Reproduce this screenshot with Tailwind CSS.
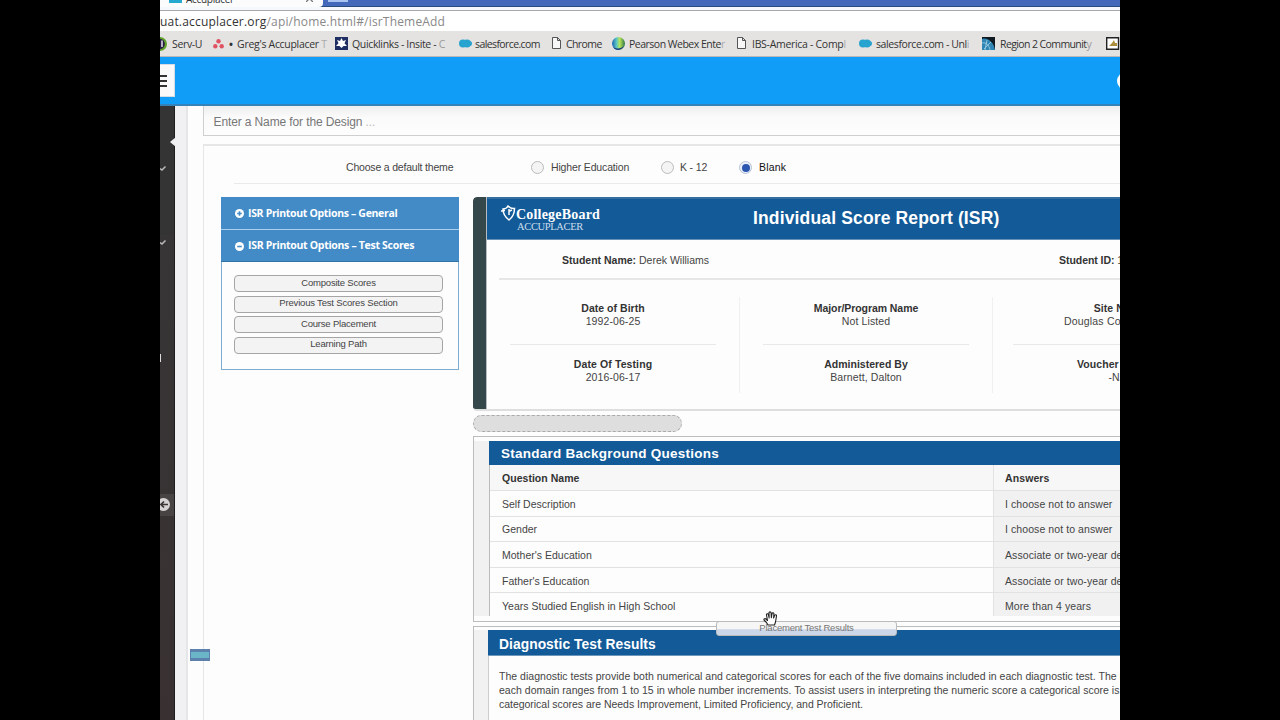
<!DOCTYPE html>
<html lang="en">
<head>
<meta charset="utf-8">
<title>Individual Score Report Designer</title>
<script src="https://cdn.jsdelivr.net/npm/@tailwindcss/browser@4"></script>
</head>
<body class="bg-black">
<div class="mx-auto flex h-[720px] w-[960px] flex-col overflow-hidden bg-[#fdfdfd] font-['Liberation_Sans',Arial,sans-serif] text-[11px] text-[#444] whitespace-nowrap">

  <!-- Browser tab strip -->
  <div class="flex h-[7px] shrink-0 bg-[#4469bb] border-b border-[#2b4a80]">
    <div class="flex h-[7px] w-[163px] shrink-0 items-end overflow-hidden rounded-br-[4px] bg-[#fcfcfd]">
      <div class="ml-[9px] mb-[4px] h-[5px] w-[13px] shrink-0 bg-[#27a9cf]"></div>
      <div class="mb-[3px] ml-[4px] w-[120px] font-['Open_Sans',sans-serif] text-[10px] leading-[10px] tracking-[-0.3px] text-[#333]">Accuplacer</div>
      <svg class="mb-[5px] h-[7px] w-[7px] shrink-0" viewBox="0 0 7 7" stroke="#777" stroke-width="1.3"><path d="M0 0L7 7M7 0L0 7"/></svg>
    </div>
    <div class="ml-[5px] h-[2px] w-[20px] bg-[#a9c4f0]"></div>
  </div>
  <div class="h-[4px] shrink-0 border-b border-[#aaa7ab] bg-[#f5f8fc]"></div>
  <!-- Address bar -->
  <div class="h-[20px] shrink-0 bg-white font-['Open_Sans',sans-serif] text-[12px] leading-[22px] tracking-[0.18px] text-[#888]"><span class="text-[#333]">uat.accuplacer.org</span>/api/home.html#/isrThemeAdd</div>
  <!-- Bookmarks -->
  <div class="relative h-[26px] shrink-0 border-b border-[#b9b6b6] bg-[#e5e3e2] font-['Open_Sans',sans-serif] text-[10.5px] leading-[27px] text-[#333]">
    <svg class="absolute left-[-7px] top-[6px] h-[14px] w-[14px]" viewBox="0 0 14 14"><circle cx="7" cy="7" r="7" fill="#63a32c"/><circle cx="6.500" cy="7" r="5.300" fill="#271b45"/><path d="M9 3.500V10" stroke="#fff" stroke-width="1.300"/></svg>
    <span class="absolute left-[12px] tracking-[-0.35px]">Serv-U</span>
    <svg class="absolute left-[53px] top-[8px] h-[10px] w-[11px]" viewBox="0 0 11 10" fill="#df5362"><circle cx="5.5" cy="2.3" r="2.2"/><circle cx="2.3" cy="7.3" r="2.2"/><circle cx="8.7" cy="7.3" r="2.2"/></svg>
    <span class="absolute left-[69px] tracking-[-0.3px]"><span class="mr-[2px] font-bold">•</span> Greg's Accuplacer <span class="text-[#aaa]">T</span></span>
    <svg class="absolute left-[175px] top-[6px] h-[13px] w-[13px]" viewBox="0 0 13 13"><path fill="#1e2e63" d="M0 0H13V13H0Z"/><path fill="#fff" d="M6.5 1L8 4L11 3L9.5 6.3L12 9H8.5L6.5 11L4.500 9H1L3.500 6.300L2 3L5 4Z"/></svg>
    <span class="absolute left-[192px] tracking-[-0.35px]">Quicklinks - Insite - <span class="text-[#999]">C</span></span>
    <svg class="absolute left-[299px] top-[8px] h-[10px] w-[13px]" viewBox="0 0 13 10" fill="#27a3d0"><circle cx="4" cy="4.500" r="4"/><circle cx="8" cy="4.500" r="4"/><circle cx="10.500" cy="4.500" r="2.500"/></svg>
    <span class="absolute left-[315px] tracking-[-0.6px]">salesforce.com</span>
    <svg class="absolute left-[392px] top-[6px] h-[12px] w-[9px]" viewBox="0 0 9 12" fill="#f7f7f7" stroke="#555"><path d="M.5.5H5.500L8.500 3.500V11.500H.5ZM5.500.5V3.500H8.500"/></svg>
    <span class="absolute left-[406px] tracking-[-0.6px]">Chrome</span>
    <svg class="absolute left-[452px] top-[6px] h-[13px] w-[13px]" viewBox="0 0 13 13"><defs><linearGradient id="orb"><stop stop-color="#1c62b0"/><stop offset=".35" stop-color="#5dc6c4"/><stop offset=".6" stop-color="#b9e457"/><stop offset="1" stop-color="#26734b"/></linearGradient></defs><circle cx="6.500" cy="6.500" r="6.500" fill="url(#orb)"/><path d="M1 10C4 12 9 12 12 9C10 14 3 14 1 10" fill="#153f83"/></svg>
    <span class="absolute left-[469px] tracking-[-0.5px]">Pearson Webex Ente<span class="text-[#aaa]">r</span></span>
    <svg class="absolute left-[577px] top-[6px] h-[12px] w-[9px]" viewBox="0 0 9 12" fill="#f7f7f7" stroke="#555"><path d="M.5.5H5.500L8.500 3.500V11.500H.5ZM5.500.5V3.500H8.500"/></svg>
    <span class="absolute left-[592px] tracking-[-0.3px]">IBS-America - Comp<span class="text-[#aaa]">l</span></span>
    <svg class="absolute left-[699px] top-[8px] h-[10px] w-[13px]" viewBox="0 0 13 10" fill="#27a3d0"><circle cx="4" cy="4.500" r="4"/><circle cx="8" cy="4.500" r="4"/><circle cx="10.500" cy="4.500" r="2.500"/></svg>
    <span class="absolute left-[716px] tracking-[-0.4px]">salesforce.com - Unl<span class="text-[#aaa]">i</span></span>
    <svg class="absolute left-[822px] top-[6px] h-[13px] w-[13px]" viewBox="0 0 13 13"><path fill="#101820" d="M0 0H13V13H0Z"/><path fill="#2f86b5" d="M0 2C6 0 12 6 13 13H0Z"/><path d="M0 6C4 5 7 8 8 13M5 3L3 13M9 5L2 12" stroke="#a8d4e5" fill="none" stroke-width=".8"/></svg>
    <span class="absolute left-[840px] tracking-[-0.6px]">Region 2 Communit<span class="text-[#999]">y</span></span>
    <svg class="absolute left-[946px] top-[6px] h-[13px] w-[14px]" viewBox="0 0 14 13"><path d="M.7.7H12.500V12.300H.7Z" fill="#fff" stroke="#222" stroke-width="1.400"/><path d="M3 9L6 6L8 3L9 6H11V9Z" fill="#ad8d3b"/></svg>
  </div>
  <!-- Application header -->
  <header class="flex h-[49px] shrink-0 items-center justify-between border-b-2 border-[#3382b9] bg-[#0f9df8]">
    <div class="flex h-[33px] w-[15px] flex-col justify-center gap-[3px] border border-l-0 border-[#d5dce3] bg-[#f9f9fa]">
      <div class="h-[2px] w-[7px] bg-[#333]"></div><div class="h-[2px] w-[7px] bg-[#333]"></div><div class="h-[2px] w-[7px] bg-[#333]"></div>
    </div>
    <svg class="h-[18px] w-[3px]" viewBox="0 0 3 18"><circle cx="9" cy="9" r="9" fill="#fff"/></svg>
  </header>

  <div class="flex min-h-0 flex-1">
    <!-- Collapsed side navigation -->
    <nav class="relative w-[15px] shrink-0 border-r border-[#1f1d1d] bg-linear-to-b from-[#363637] to-[#393131]">
      <div class="h-[129px] bg-[#343435]"></div>
      <svg class="absolute left-[10px] top-[31px] h-[10px] w-[6px]" viewBox="0 0 6 10"><path d="M6 0V10L0 5Z" fill="#f0f0f2"/></svg>
      <svg class="absolute left-0 top-[60px] h-[5px] w-[6px]" viewBox="0 0 6 5" fill="none" stroke="#bbb" stroke-width="1.500"><path d="M0 2.500L2 4L5.500 .5"/></svg>
      <svg class="absolute left-0 top-[134px] h-[5px] w-[6px]" viewBox="0 0 6 5" fill="none" stroke="#bbb" stroke-width="1.500"><path d="M0 2.500L2 4L5.500 .5"/></svg>
      <div class="absolute left-0 top-[248px] h-[8px] w-px bg-[#ddd]"></div>
      <div class="absolute left-0 top-[388px] h-[22px] w-[14px] bg-[#484444]"></div>
      <svg class="absolute left-[-3px] top-[392px] h-[13px] w-[13px]" viewBox="0 0 13 13"><circle cx="6.500" cy="6.500" r="6.500" fill="#d5d3d3"/><path d="M11 6.500H4M7 3.500L4 6.500L7 9.500" fill="none" stroke="#3a3636" stroke-width="1.700"/></svg>
    </nav>
    <div class="relative w-[13px] shrink-0 border-r-2 border-[#e6e6e8] bg-[#f1f1f3]">
      <div class="absolute left-[15px] top-[543px] h-[12px] w-[20px] border-y-3 border-x border-[#5b81ac] bg-[#6bb5c8]"></div>
    </div>
    <main class="ml-[15px] min-w-0 flex-1">
      <div class="h-[30px] border-b border-l border-[#cfcfcf] bg-linear-to-b from-[#eeeeef] via-[#fbfbfb] via-40% to-[#fdfdfd] pl-[9.5px] text-[12px] leading-[33px] tracking-[-0.12px] text-[#777]">Enter a Name for the Design <span class="text-[#bbb]">...</span></div>
      <section class="mt-[8px] h-[580px] border-l border-t-2 border-[#e6e6e7] pl-[17px]">
        <!-- Theme selector -->
        <div class="ml-[13px] flex h-[38px] items-center border-b border-[#eaeaea] pb-px pt-[7px] text-[10.5px] text-[#444]">
          <span class="ml-[112px] w-[185px] tracking-[-0.19px]">Choose a default theme</span>
          <i class="h-[13px] w-[13px] shrink-0 rounded-full border border-[#bbb] bg-[#f4f4f4]"></i>
          <span class="ml-[7px] w-[110px] tracking-[-0.15px]">Higher Education</span>
          <i class="h-[13px] w-[13px] shrink-0 rounded-full border border-[#bbb] bg-[#f4f4f4]"></i>
          <span class="ml-[6px] w-[59px] tracking-[-0.15px]">K - 12</span>
          <i class="flex h-[13px] w-[13px] shrink-0 items-center justify-center rounded-full border border-[#b9c4d8] bg-[#e9eef8]"><b class="h-[8px] w-[8px] rounded-full bg-[#2b57b0]"></b></i>
          <span class="ml-[7px] tracking-[0.2px] text-[#111]">Blank</span>
        </div>

        <div class="mt-[13px] flex gap-[14px]">
          <!-- Printout options accordion -->
          <aside class="h-[173px] w-[238px] shrink-0 border border-[#7eacd0] bg-[#fdfdfd]">
            <div class="-mx-px -mt-px flex h-[32px] items-center gap-[4px] bg-[#428bc7] pl-[14px] pt-px font-['Open_Sans',sans-serif] text-[10.5px] font-bold tracking-[-0.32px] text-white">
              <svg class="h-[9px] w-[9px]" viewBox="0 0 10 10"><circle cx="5" cy="5" r="5" fill="#fff"/><path d="M5 2.500V7.500M2.500 5H7.500" stroke="#428bc7" stroke-width="1.800"/></svg>
              ISR Printout Options – General
            </div>
            <div class="-mx-px flex h-[33px] items-center gap-[4px] border-b border-t border-b-[#3274aa] border-t-[#a9cff0] bg-[#428bc7] pl-[14px] pt-px font-['Open_Sans',sans-serif] text-[10.5px] font-bold tracking-[-0.3px] text-white">
              <svg class="h-[9px] w-[9px]" viewBox="0 0 10 10"><circle cx="5" cy="5" r="5" fill="#fff"/><path d="M2.500 5H7.500" stroke="#428bc7" stroke-width="1.800"/></svg>
              ISR Printout Options – Test Scores
            </div>
            <div class="flex flex-col gap-[3.500px] pl-[12px] pr-[15px] pt-[13px] text-center text-[9.5px] leading-[13px] tracking-[-0.2px] text-[#444]">
              <div class="h-[17px] rounded-[4px] border border-[#a5a5a5] bg-[#f3f3f4]">Composite Scores</div>
              <div class="h-[17px] rounded-[4px] border border-[#a5a5a5] bg-[#f3f3f4] leading-[12px] tracking-[-0.18px]">Previous Test Scores Section</div>
              <div class="h-[17px] rounded-[4px] border border-[#a5a5a5] bg-[#f3f3f4]">Course Placement</div>
              <div class="h-[17px] rounded-[4px] border border-[#a5a5a5] bg-[#f3f3f4] leading-[12px]">Learning Path</div>
            </div>
          </aside>

          <!-- Report preview -->
          <div class="min-w-0 flex-1 text-[10.5px]">
            <article class="flex h-[214px] overflow-hidden rounded-l-[4px] border-b-2 border-[#dedede]">
              <div class="-mb-[2px] w-[14px] shrink-0 rounded-l-[4px] border-r border-[#b6bcbf] bg-[#34474a]"></div>
              <div class="min-w-0 flex-1 overflow-hidden">
                <div class="flex h-[43px] items-center border-b border-t-2 border-b-[#6791b6] border-t-[#346f9f] bg-[#125a98] text-white">
                  <svg class="-mt-[11px] ml-[14px] h-[17px] w-[15px] shrink-0" viewBox="0 0 15 17" fill="none" stroke="#fff" stroke-width="1.500"><path d="M2 4C4 4 6 3 7 1C9 3 11 4 13.500 3.500C13.500 9 12 12 8 15C4 12 2 9 2 4ZM0 6L4 5.500M8 4V10M7.500 6.500L11 5"/></svg>
                  <div class="w-[237px] pt-[2px] font-['Liberation_Serif',serif]">
                    <div class="text-[14px] font-bold leading-[13px] tracking-[0.2px]">CollegeBoard</div>
                    <div class="pl-px text-[10.5px] leading-[12px] tracking-[-0.35px] text-[#cfdfec]">ACCUPLACER</div>
                  </div>
                  <h1 class="pb-px text-[17.5px] font-bold tracking-[0.15px]">Individual Score Report (ISR)</h1>
                </div>
                <div class="ml-[12px] flex h-[40px] border-b-2 border-[#e6e6e6] pl-[63px] leading-[41px]">
                  <span class="w-[497px] shrink-0"><b class="text-[#333]">Student Name:</b> Derek Williams</span>
                  <span class="shrink-0 tracking-[-0.05px]"><b class="text-[#333]">Student ID:</b> 123</span>
                </div>
                <div class="mt-[17px] grid h-[96px] w-[759px] grid-cols-[253px_253px_253px] text-center leading-[13px] tracking-[0.1px]">
                  <div class="border-r border-[#f0f0f0] px-[23px]">
                    <div class="h-[48px] border-b border-[#e9e9e9] pt-[5px]"><b class="tracking-[0.03px] text-[#333]">Date of Birth</b><br>1992-06-25</div>
                    <div class="pt-[13px]"><b class="text-[#333]">Date Of Testing</b><br>2016-06-17</div>
                  </div>
                  <div class="border-r border-[#f0f0f0] px-[23px]">
                    <div class="h-[48px] border-b border-[#e9e9e9] pt-[5px]"><b class="tracking-[-0.07px] text-[#333]">Major/Program Name</b><br>Not Listed</div>
                    <div class="pt-[13px]"><b class="tracking-[0px] text-[#333]">Administered By</b><br>Barnett, Dalton</div>
                  </div>
                  <div class="px-[20px]">
                    <div class="h-[48px] border-b border-[#e9e9e9] pt-[5px]"><b class="text-[#333]">Site Name</b><br><span class="tracking-[0.2px]">Douglas College Site 1</span></div>
                    <div class="pt-[13px]"><b class="text-[#333]">Voucher Number</b><br>-NA-</div>
                  </div>
                </div>
              </div>
            </article>

            <div class="mt-[4px] h-[17px] w-[209px] rounded-full border border-dashed border-[#aaa] bg-[#dedede]"></div>

            <article class="mt-[4px] h-[186px] border border-r-0 border-[#bcbcbc] bg-[#fdfdfd]">
              <div class="mt-[4px] border-l-[15px] border-[#f1f1f2]">
                <h2 class="h-[24px] bg-[#125a98] pl-[12px] text-[13.5px] font-bold leading-[25px] tracking-[0.25px] text-white">Standard Background Questions</h2>
                <div class="grid grid-cols-[504px_1fr] border-l border-[#bbb] leading-[26px] tracking-[0.01px]">
                  <div class="h-[26px] border-b border-r border-[#e2e2e2] bg-[#f7f7f7] pl-[12px] font-bold tracking-[0.03px] text-[#333]">Question Name</div>
                  <div class="h-[26px] border-b border-[#e2e2e2] bg-[#f7f7f7] pl-[11px] font-bold tracking-[0.1px] text-[#333]">Answers</div>
                  <div class="h-[25.600px] border-b border-r border-[#e2e2e2] pl-[12px]">Self Description</div>
                  <div class="h-[25.600px] border-b border-[#e2e2e2] bg-[#f1f1f2] pl-[11px] tracking-[0.08px]">I choose not to answer</div>
                  <div class="h-[25.600px] border-b border-r border-[#e2e2e2] pl-[12px] leading-[25px]">Gender</div>
                  <div class="h-[25.600px] border-b border-[#e2e2e2] bg-[#f1f1f2] pl-[11px] leading-[25px] tracking-[0.08px]">I choose not to answer</div>
                  <div class="h-[25.600px] border-b border-r border-[#e2e2e2] pl-[12px]">Mother's Education</div>
                  <div class="h-[25.600px] border-b border-[#e2e2e2] bg-[#f1f1f2] pl-[11px] tracking-[0.08px]">Associate or two-year degree</div>
                  <div class="h-[25.600px] border-b border-r border-[#e2e2e2] pl-[12px]">Father's Education</div>
                  <div class="h-[25.600px] border-b border-[#e2e2e2] bg-[#f1f1f2] pl-[11px] tracking-[0.08px]">Associate or two-year degree</div>
                  <div class="h-[23px] border-r border-[#e2e2e2] pl-[12px]">Years Studied English in High School</div>
                  <div class="h-[23px] bg-[#f1f1f2] pl-[11px] tracking-[0.08px]">More than 4 years</div>
                </div>
              </div>
            </article>

            <article class="relative mt-[4px] h-[110px] border-l border-t border-[#bcbcbc] bg-[#fdfdfd] pt-[3px]">
              <div class="h-[106px] border-l-[14px] border-[#f1f1f2]">
                <h2 class="h-[26px] border-b border-[#6e98bb] bg-[#125a98] pl-[11px] text-[13.8px] font-bold leading-[29px] tracking-[0.06px] text-white">Diagnostic Test Results</h2>
                <p class="h-[80px] border-l border-[#ccc] pl-[10px] pt-[14px] leading-[13.800px] tracking-[-0.03px]"><span class="tracking-[0.02px]">The diagnostic tests provide both numerical and categorical scores for each of the five domains included in each diagnostic test. The numeric score for<br>each domain ranges from 1 to 15 in whole number increments. To assist users in interpreting the numeric score a categorical score is also given. The</span><br>categorical scores are Needs Improvement, Limited Proficiency, and Proficient.</p>
              </div>
              <!-- Section being dragged into place -->
              <div class="absolute left-[242px] top-[-6px] h-[15px] w-[181px] rounded-[3px] border border-[#bbb] bg-linear-to-b from-[#f6f6f6] from-50% to-[#ccd6e9] to-60% text-center text-[9.5px] leading-[12px] tracking-[-0.22px] text-[#777]">Placement Test Results</div>
              <svg class="absolute left-[289px] top-[-16px] h-[16px] w-[15px]" viewBox="0 0 15 16" fill="#fff" stroke="#222" stroke-width="1.100" stroke-linejoin="round"><path d="M5 14L3.500 11.500L1 9C.5 7.500 2.200 7.300 3 8L4.500 9.500L3.500 4C3.300 2.500 5 2.200 5.400 3.600L6.200 7L6 2C6 .5 8 .5 8.100 2L8.400 6.600L9 2.600C9.300 1.300 11 1.600 10.900 3L10.600 7L11.700 4.300C12.400 3.200 13.800 3.800 13.500 5L12.500 11L11.500 14Z"/></svg>
            </article>
          </div>
        </div>
      </section>
    </main>
  </div>
</div>
</body>
</html>
